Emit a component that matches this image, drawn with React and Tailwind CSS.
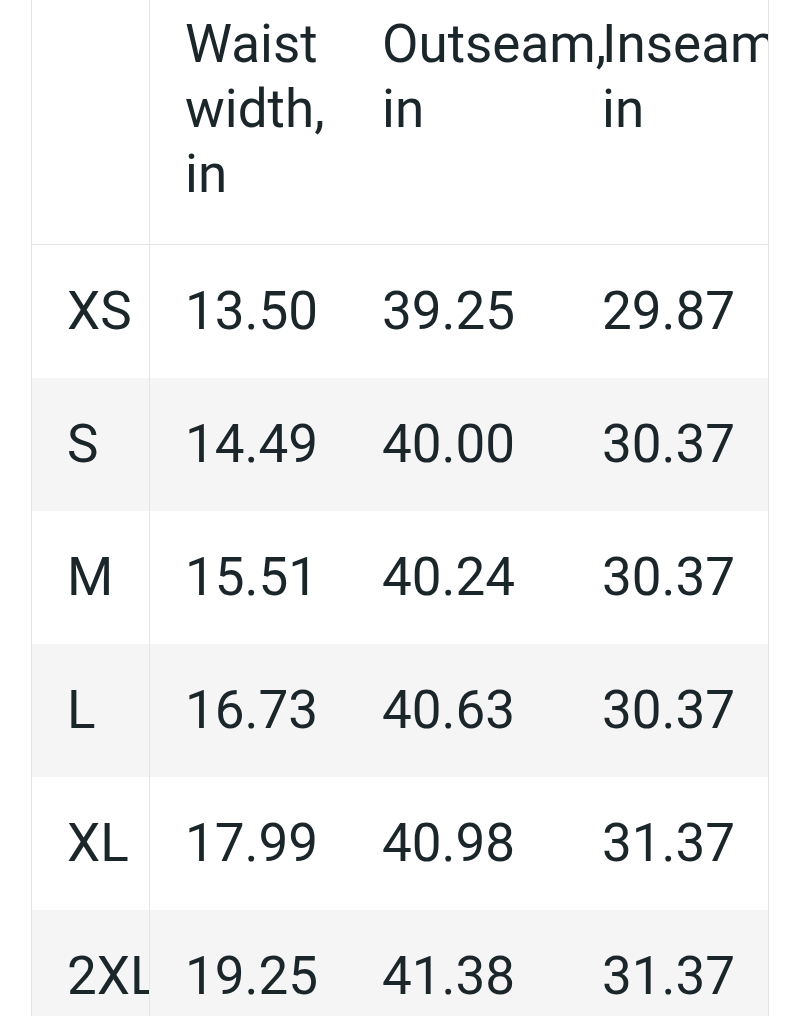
import React from 'react';

const rows = [
  { size: 'XS', waist: '13.50', outseam: '39.25', inseam: '29.87' },
  { size: 'S', waist: '14.49', outseam: '40.00', inseam: '30.37' },
  { size: 'M', waist: '15.51', outseam: '40.24', inseam: '30.37' },
  { size: 'L', waist: '16.73', outseam: '40.63', inseam: '30.37' },
  { size: 'XL', waist: '17.99', outseam: '40.98', inseam: '31.37' },
  { size: '2XL', waist: '19.25', outseam: '41.38', inseam: '31.37' },
];

const cols = 'grid grid-cols-[118px_196px_220px_201px]';

const App = () => {
  return (
    <div className="min-h-screen bg-white pl-[31px] text-[#1b262b]" style={{ fontFamily: 'Roboto, "Noto Sans", sans-serif' }}>
      <div className="w-[738px] h-[1016px] overflow-hidden border-x border-[#e4e4e4] text-[53px] leading-[65px]">
        {/* header */}
        <div className={`${cols} h-[245px] border-b border-[#e4e4e4]`}>
          <div className="border-r border-[#e4e4e4]"></div>
          <div className="pl-[35px] pt-3 whitespace-normal">Waist width, in</div>
          <div className="pl-9 pt-3 whitespace-normal">Outseam, in</div>
          <div className="pl-9 pt-3 whitespace-normal">Inseam, in</div>
        </div>

        {rows.map((row, i) => (
          <div key={row.size} className={`${cols} h-[133px] ${i % 2 === 1 ? 'bg-[#f5f5f5]' : 'bg-white'}`}>
            <div className="flex items-center pl-[35px] border-r border-[#e4e4e4] whitespace-nowrap overflow-hidden">{row.size}</div>
            <div className="flex items-center pl-[35px] whitespace-nowrap">{row.waist}</div>
            <div className="flex items-center pl-9 whitespace-nowrap">{row.outseam}</div>
            <div className="flex items-center pl-9 whitespace-nowrap">{row.inseam}</div>
          </div>
        ))}
      </div>
    </div>
  );
};

export default App;
